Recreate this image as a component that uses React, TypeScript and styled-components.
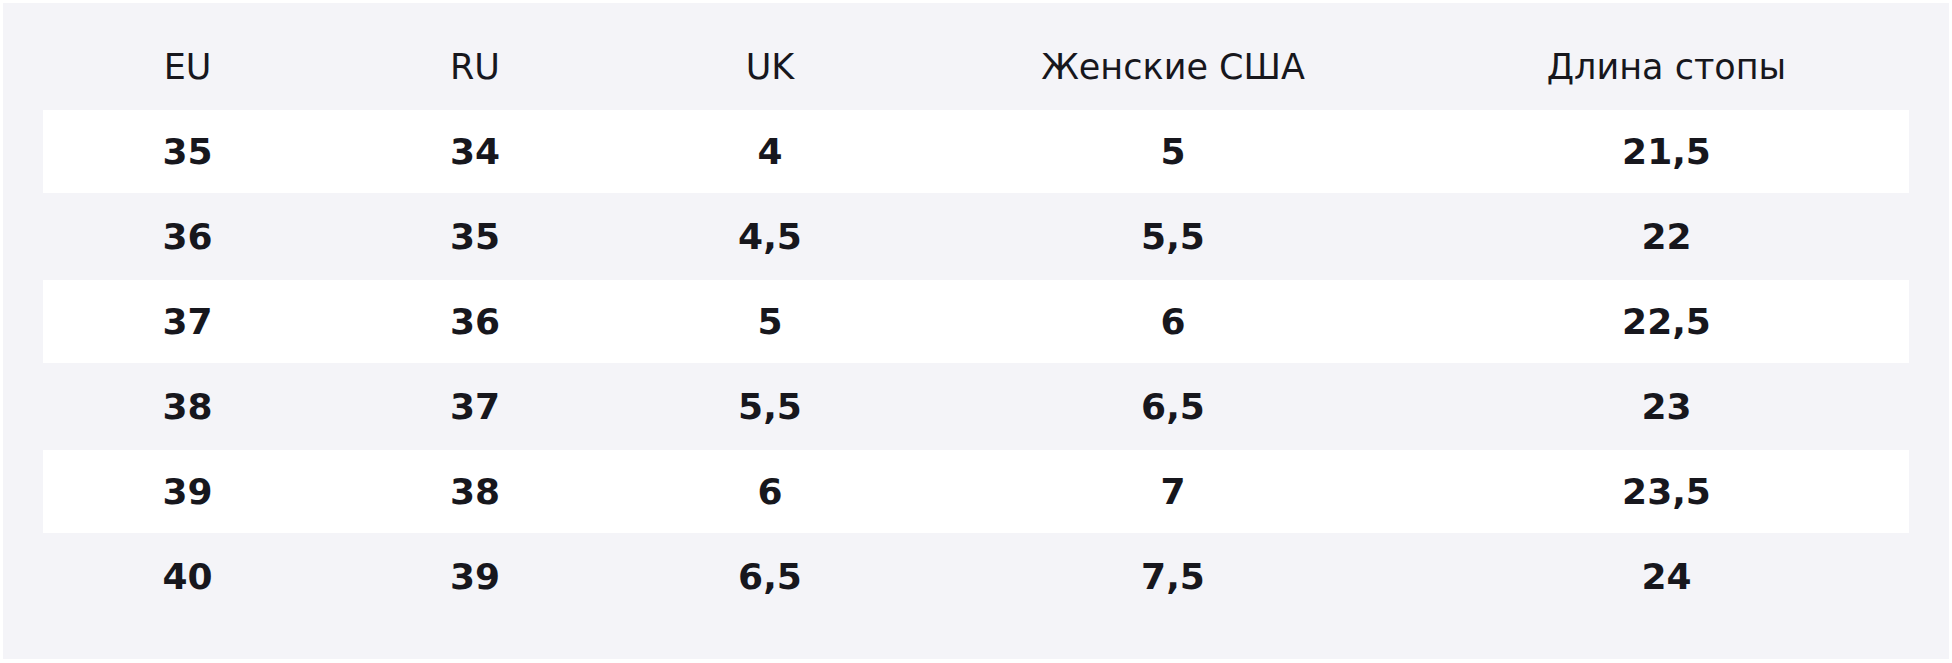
import React from 'react'
import styled, { createGlobalStyle } from 'styled-components'

const GlobalStyle = createGlobalStyle`
  html, body {
    margin: 0;
    padding: 0;
    background: #ffffff;
  }
  body {
    padding: 3px;
    font-family: "DejaVu Sans", Verdana, sans-serif;
    color: #17171d;
  }
`

const Panel = styled.div`
  width: 1946px;
  height: 656px;
  box-sizing: border-box;
  background: #f4f4f8;
  padding: 0 40px 43px;
`

const Grid = styled.div`
  display: grid;
  grid-template-columns: 289px 286px 304px 502px 485px;
`

const HeadRow = styled(Grid)`
  height: 107px;
  padding-top: 21px;
  box-sizing: border-box;
  align-items: center;
`

const HeadCell = styled.div`
  text-align: center;
  font-size: 35px;
  font-weight: 400;
  line-height: 1;
`

const Row = styled(Grid)<{ $striped: boolean }>`
  height: ${(p) => (p.$striped ? 83 : 87)}px;
  align-items: center;
  background: ${(p) => (p.$striped ? '#ffffff' : 'transparent')};
`

const Cell = styled.div`
  text-align: center;
  font-size: 36px;
  font-weight: 700;
  line-height: 1;
`

const headers = ['EU', 'RU', 'UK', 'Женские США', 'Длина стопы']

const sizes = [
  ['35', '34', '4', '5', '21,5'],
  ['36', '35', '4,5', '5,5', '22'],
  ['37', '36', '5', '6', '22,5'],
  ['38', '37', '5,5', '6,5', '23'],
  ['39', '38', '6', '7', '23,5'],
  ['40', '39', '6,5', '7,5', '24'],
]

export default function App() {
  return (
    <>
      <GlobalStyle />
      <Panel>
        <HeadRow>
          {headers.map((h) => (
            <HeadCell key={h}>{h}</HeadCell>
          ))}
        </HeadRow>
        {sizes.map((row, i) => (
          <Row key={row[0]} $striped={i % 2 === 0}>
            {row.map((v, j) => (
              <Cell key={j}>{v}</Cell>
            ))}
          </Row>
        ))}
      </Panel>
    </>
  )
}
